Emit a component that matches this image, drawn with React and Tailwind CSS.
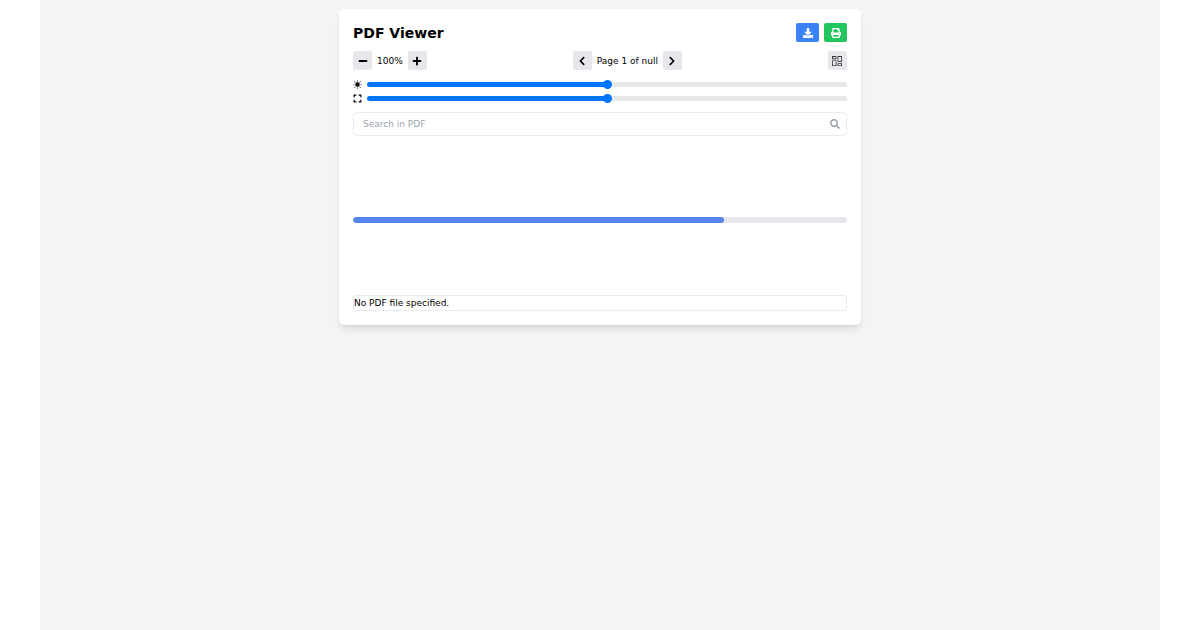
import { useState } from 'react';
import { FaDownload, FaPrint, FaMinus, FaPlus, FaChevronLeft, FaChevronRight, FaSearch, FaExpand } from 'react-icons/fa';
import { BsColumnsGap, BsFillBrightnessHighFill } from 'react-icons/bs';

const IconButton = ({ label, onClick, className = 'w-[19px] bg-gray-200 text-black', children }) => (
  <button
    type="button"
    aria-label={label}
    onClick={onClick}
    className={`flex h-[19px] items-center justify-center rounded-xs ${className}`}
  >
    {children}
  </button>
);

const Slider = ({ id, label, icon, value, onChange }) => (
  <div className="flex h-[14px] items-center gap-[5px]">
    <label htmlFor={id} aria-label={label}>
      {icon}
    </label>
    <input
      id={id}
      type="range"
      min="0"
      max="200"
      value={value}
      onChange={(e) => onChange(Number(e.target.value))}
      className="h-[5px] min-w-0 flex-1 appearance-none rounded-full bg-[#e8e8e8] bg-no-repeat [&::-webkit-slider-thumb]:size-[9px] [&::-webkit-slider-thumb]:appearance-none [&::-webkit-slider-thumb]:rounded-full [&::-webkit-slider-thumb]:bg-[#0075ff]"
      style={{
        backgroundImage: 'linear-gradient(#0075ff, #0075ff)',
        backgroundSize: `${value / 2}% 100%`,
      }}
    />
  </div>
);

const App = () => {
  const [zoom, setZoom] = useState(100);
  const [page, setPage] = useState(1);
  const [brightness, setBrightness] = useState(100);
  const [contrast, setContrast] = useState(100);
  const [search, setSearch] = useState('');
  const [progress] = useState(75);

  return (
    <div className="min-h-screen bg-white px-10 font-['DejaVu_Sans',sans-serif] text-[9px] leading-[14px] text-black">
      <div className="min-h-screen bg-gray-100 pt-[9px]">
        <main className="mx-auto max-w-[522px] rounded-[5px] bg-white p-[14px] shadow-[0_6px_9px_-2px_rgb(0_0_0/0.1),0_2px_4px_-2px_rgb(0_0_0/0.1)]">
          <div className="mb-[9px] flex items-center justify-between">
            <h1 className="text-[14px] leading-[18px] font-bold">PDF Viewer</h1>
            <div className="flex gap-[5px]">
              <IconButton label="Download" className="w-[23px] bg-[#3b82f6] text-white">
                <FaDownload size={10} />
              </IconButton>
              <IconButton label="Print" className="w-[23px] bg-[#22c55e] text-white">
                <FaPrint size={10} />
              </IconButton>
            </div>
          </div>

          {/* Toolbar */}
          <div className="mb-[7px] flex items-center justify-between">
            <div className="flex items-center gap-[5px]">
              <IconButton label="Zoom out" onClick={() => setZoom(Math.max(10, zoom - 10))}>
                <FaMinus size={10} />
              </IconButton>
              <span>{zoom}%</span>
              <IconButton label="Zoom in" onClick={() => setZoom(zoom + 10)}>
                <FaPlus size={10} />
              </IconButton>
            </div>
            <div className="flex items-center gap-[5px]">
              <IconButton label="Previous page" onClick={() => setPage(Math.max(1, page - 1))}>
                <FaChevronLeft size={10} />
              </IconButton>
              <span>Page {page} of null</span>
              <IconButton label="Next page" onClick={() => setPage(page + 1)}>
                <FaChevronRight size={10} />
              </IconButton>
            </div>
            <IconButton label="Thumbnails">
              <BsColumnsGap size={10} />
            </IconButton>
          </div>

          {/* Adjustments */}
          <div className="mb-[7px]">
            <Slider
              id="brightness"
              label="Brightness"
              icon={<BsFillBrightnessHighFill size={9} />}
              value={brightness}
              onChange={setBrightness}
            />
            <Slider
              id="contrast"
              label="Contrast"
              icon={<FaExpand size={9} />}
              value={contrast}
              onChange={setContrast}
            />
          </div>

          <div className="flex h-[24px] items-center rounded-[5px] border border-gray-200/80 pr-[6px] pl-[9px]">
            <input
              type="text"
              aria-label="Search in PDF"
              placeholder="Search in PDF"
              value={search}
              onChange={(e) => setSearch(e.target.value)}
              className="min-w-0 flex-1 outline-none placeholder:text-[#9ca3af]"
            />
            <FaSearch size={10} className="text-[#9ca3af]" />
          </div>

          {/* Loading progress */}
          <div className="flex h-[159px] items-center pt-[9px]">
            <div className="h-[6px] w-full overflow-hidden rounded-full bg-gray-200">
              <div className="h-full rounded-full bg-[#5585ea]" style={{ width: `${progress}%` }} />
            </div>
          </div>

          <div className="rounded-xs border border-gray-200/80 leading-[14px]">No PDF file specified.</div>
        </main>
      </div>
    </div>
  );
};

export default App;
